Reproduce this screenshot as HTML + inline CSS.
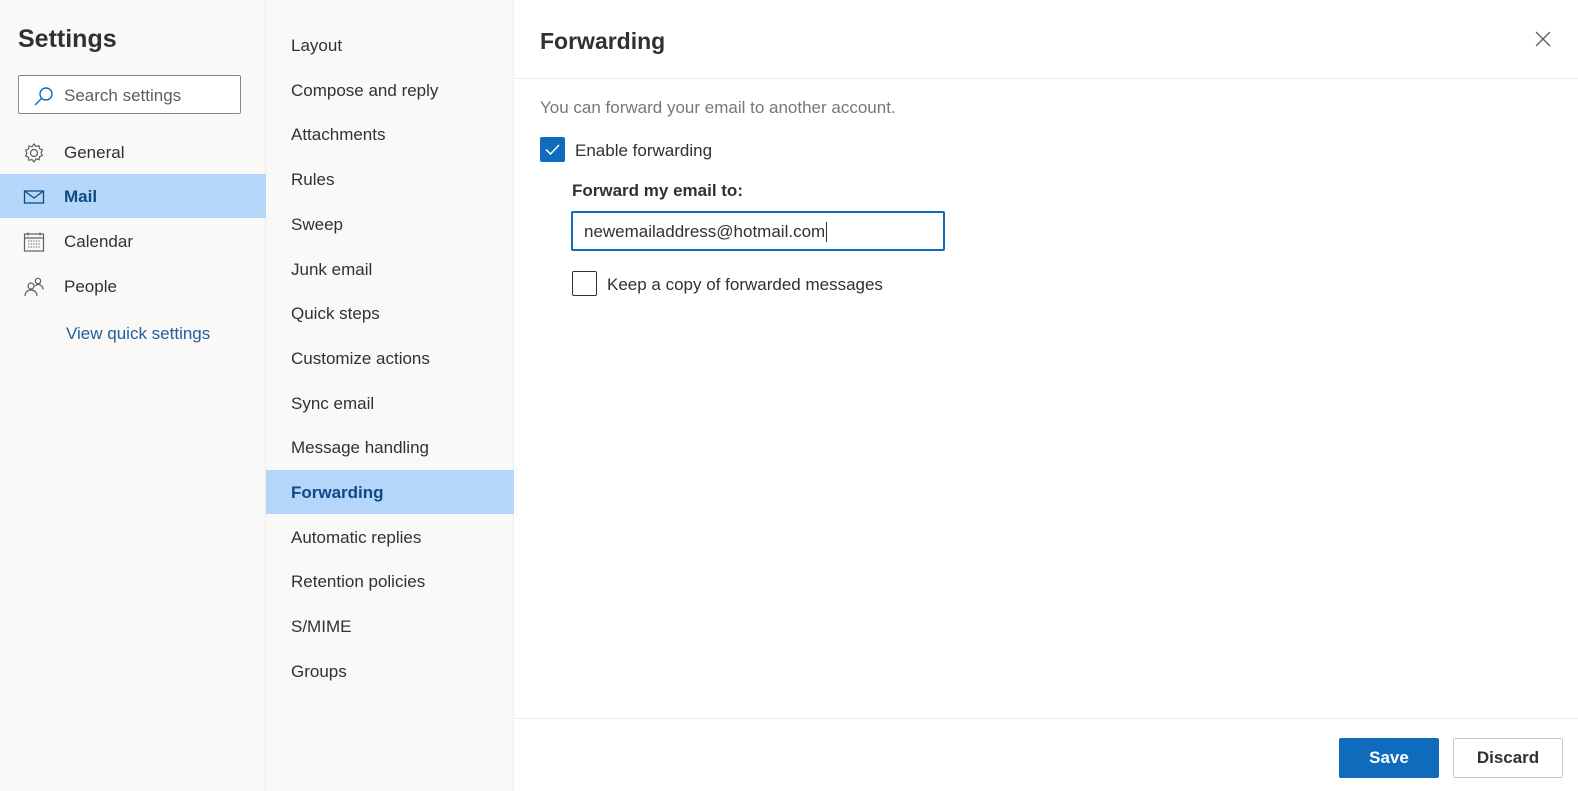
<!DOCTYPE html>
<html><head><style>
*{margin:0;padding:0;box-sizing:border-box}
body{width:1578px;height:791px;overflow:hidden;font-family:"Liberation Sans",sans-serif;color:#323130;background:#fff;position:relative}
.left{position:absolute;left:0;top:0;width:266px;height:791px;background:#faf9f8;border-right:1px solid #edebe9}
.mid{position:absolute;left:266px;top:0;width:248px;height:791px;background:#faf9f8;border-right:1px solid #edebe9}
.title{position:absolute;left:18px;top:25px;font-size:25px;font-weight:600;color:#323130}
.search{position:absolute;left:18px;top:75px;width:223px;height:39px;border:1px solid #8a8886;background:#fff;border-radius:2px}
.search span{position:absolute;left:45px;top:10px;font-size:17px;color:#605e5c}
.search svg{position:absolute;left:14px;top:9px}
.li{position:absolute;left:0;width:266px;height:44px;font-size:17px}
.li span{position:absolute;left:64px;top:13px}
.li svg{position:absolute;left:23px;top:12px}
.sel{background:#b3d6f9;color:#0f4a85;font-weight:600}
.link{position:absolute;left:66px;top:324px;font-size:17px;color:#1e5e9e}
.m{position:absolute;left:0;width:248px;height:44px;font-size:17px}
.m span{position:absolute;left:25px;top:13px}
.h{position:absolute;left:540px;top:28px;font-size:23px;font-weight:600}
.close{position:absolute;left:1534px;top:30px}
.hr{position:absolute;left:515px;right:0;height:1px;background:#edebe9}
.btn{position:absolute;top:738px;height:40px;font-size:17px;font-weight:600;border-radius:2px;text-align:center;line-height:40px}
</style></head><body>
<div class="left">
<div class="title">Settings</div>
<div class="search"><svg width="22" height="22" viewBox="0 0 22 22"><circle cx="13" cy="9" r="6" fill="none" stroke="#0f6cbd" stroke-width="1.4"/><path d="M9 13L2 20" stroke="#0f6cbd" stroke-width="1.4"/></svg><span>Search settings</span></div>
<div class="li" style="top:130px"><svg width="22" height="22" viewBox="0 0 22 22"><circle cx="11" cy="11" r="3.5" fill="none" stroke="#605e5c" stroke-width="1.2"/><path d="M11 2l2 2.5 3-.8.6 3 2.8 1.2-1.3 2.8 1.3 2.8-2.8 1.2-.6 3-3-.8L11 20l-2-2.5-3 .8-.6-3L2.6 14 3.900 11 2.6 8.2l2.8-1.2.6-3 3 .8z" fill="none" stroke="#605e5c" stroke-width="1.2"/></svg><span>General</span></div>
<div class="li sel" style="top:174px"><svg width="22" height="22" viewBox="0 0 22 22"><rect x="1.5" y="5" width="19" height="12" fill="none" stroke="#0f4a85" stroke-width="1.3"/><path d="M1.5 5l9.5 7 9.5-7" fill="none" stroke="#0f4a85" stroke-width="1.3"/></svg><span>Mail</span></div>
<div class="li" style="top:219px"><svg width="22" height="22" viewBox="0 0 22 22"><rect x="1.5" y="3" width="19" height="17" fill="none" stroke="#605e5c" stroke-width="1.2"/><path d="M1.5 7h19M5 1.5v3M17 1.5v3" stroke="#605e5c" stroke-width="1.2"/><path d="M5 10h12M5 13h12M5 16h12" stroke="#605e5c" stroke-width="1" stroke-dasharray="1.3 1.3"/></svg><span>Calendar</span></div>
<div class="li" style="top:264px"><svg width="22" height="22" viewBox="0 0 22 22"><circle cx="8" cy="10" r="3" fill="none" stroke="#605e5c" stroke-width="1.2"/><path d="M2 20c0-4 3-6 6-6s6 2 6 6" fill="none" stroke="#605e5c" stroke-width="1.2"/><circle cx="15" cy="5" r="2.7" fill="none" stroke="#605e5c" stroke-width="1.2"/><path d="M12 10c1-1 2-1.5 3-1.5 3 0 5 2 5 5" fill="none" stroke="#605e5c" stroke-width="1.2"/></svg><span>People</span></div>
<div class="link">View quick settings</div>
</div>
<div class="mid">
<div class="m" style="top:23px"><span>Layout</span></div>
<div class="m" style="top:68px"><span>Compose and reply</span></div>
<div class="m" style="top:112px"><span>Attachments</span></div>
<div class="m" style="top:157px"><span>Rules</span></div>
<div class="m" style="top:202px"><span>Sweep</span></div>
<div class="m" style="top:247px"><span>Junk email</span></div>
<div class="m" style="top:291px"><span>Quick steps</span></div>
<div class="m" style="top:336px"><span>Customize actions</span></div>
<div class="m" style="top:381px"><span>Sync email</span></div>
<div class="m" style="top:425px"><span>Message handling</span></div>
<div class="m sel" style="top:470px"><span>Forwarding</span></div>
<div class="m" style="top:515px"><span>Automatic replies</span></div>
<div class="m" style="top:559px"><span>Retention policies</span></div>
<div class="m" style="top:604px"><span>S/MIME</span></div>
<div class="m" style="top:649px"><span>Groups</span></div>
</div>
<div class="h">Forwarding</div>
<svg class="close" width="18" height="18" viewBox="0 0 18 18"><path d="M2 2l14 14M16 2L2 16" stroke="#605e5c" stroke-width="1.3"/></svg>
<div class="hr" style="top:78px"></div>
<div style="position:absolute;left:540px;top:98px;font-size:17px;color:#797775">You can forward your email to another account.</div>
<div style="position:absolute;left:540px;top:137px;width:25px;height:25px;background:#0f6cbd;border-radius:2px"><svg width="25" height="25" viewBox="0 0 25 25"><path d="M6 12.5l4.5 4.5 8.5-9" fill="none" stroke="#fff" stroke-width="1.5"/></svg></div>
<div style="position:absolute;left:575px;top:141px;font-size:17px">Enable forwarding</div>
<div style="position:absolute;left:572px;top:181px;font-size:17px;font-weight:600">Forward my email to:</div>
<div style="position:absolute;left:571px;top:211px;width:374px;height:40px;border:2px solid #0f6cbd;border-radius:2px;background:#fff"><span style="position:absolute;left:11px;top:9px;font-size:17px;border-right:1px solid #323130;padding-right:1px">newemailaddress@hotmail.com</span></div>
<div style="position:absolute;left:572px;top:271px;width:25px;height:25px;border:1px solid #323130;border-radius:2px;background:#fff"></div>
<div style="position:absolute;left:607px;top:275px;font-size:17px">Keep a copy of forwarded messages</div>
<div class="hr" style="top:718px"></div>
<div class="btn" style="left:1339px;width:100px;background:#0f6cbd;color:#fff">Save</div>
<div class="btn" style="left:1453px;width:110px;border:1px solid #c8c6c4;background:#fff;color:#323130;line-height:38px">Discard</div>
</body></html>
